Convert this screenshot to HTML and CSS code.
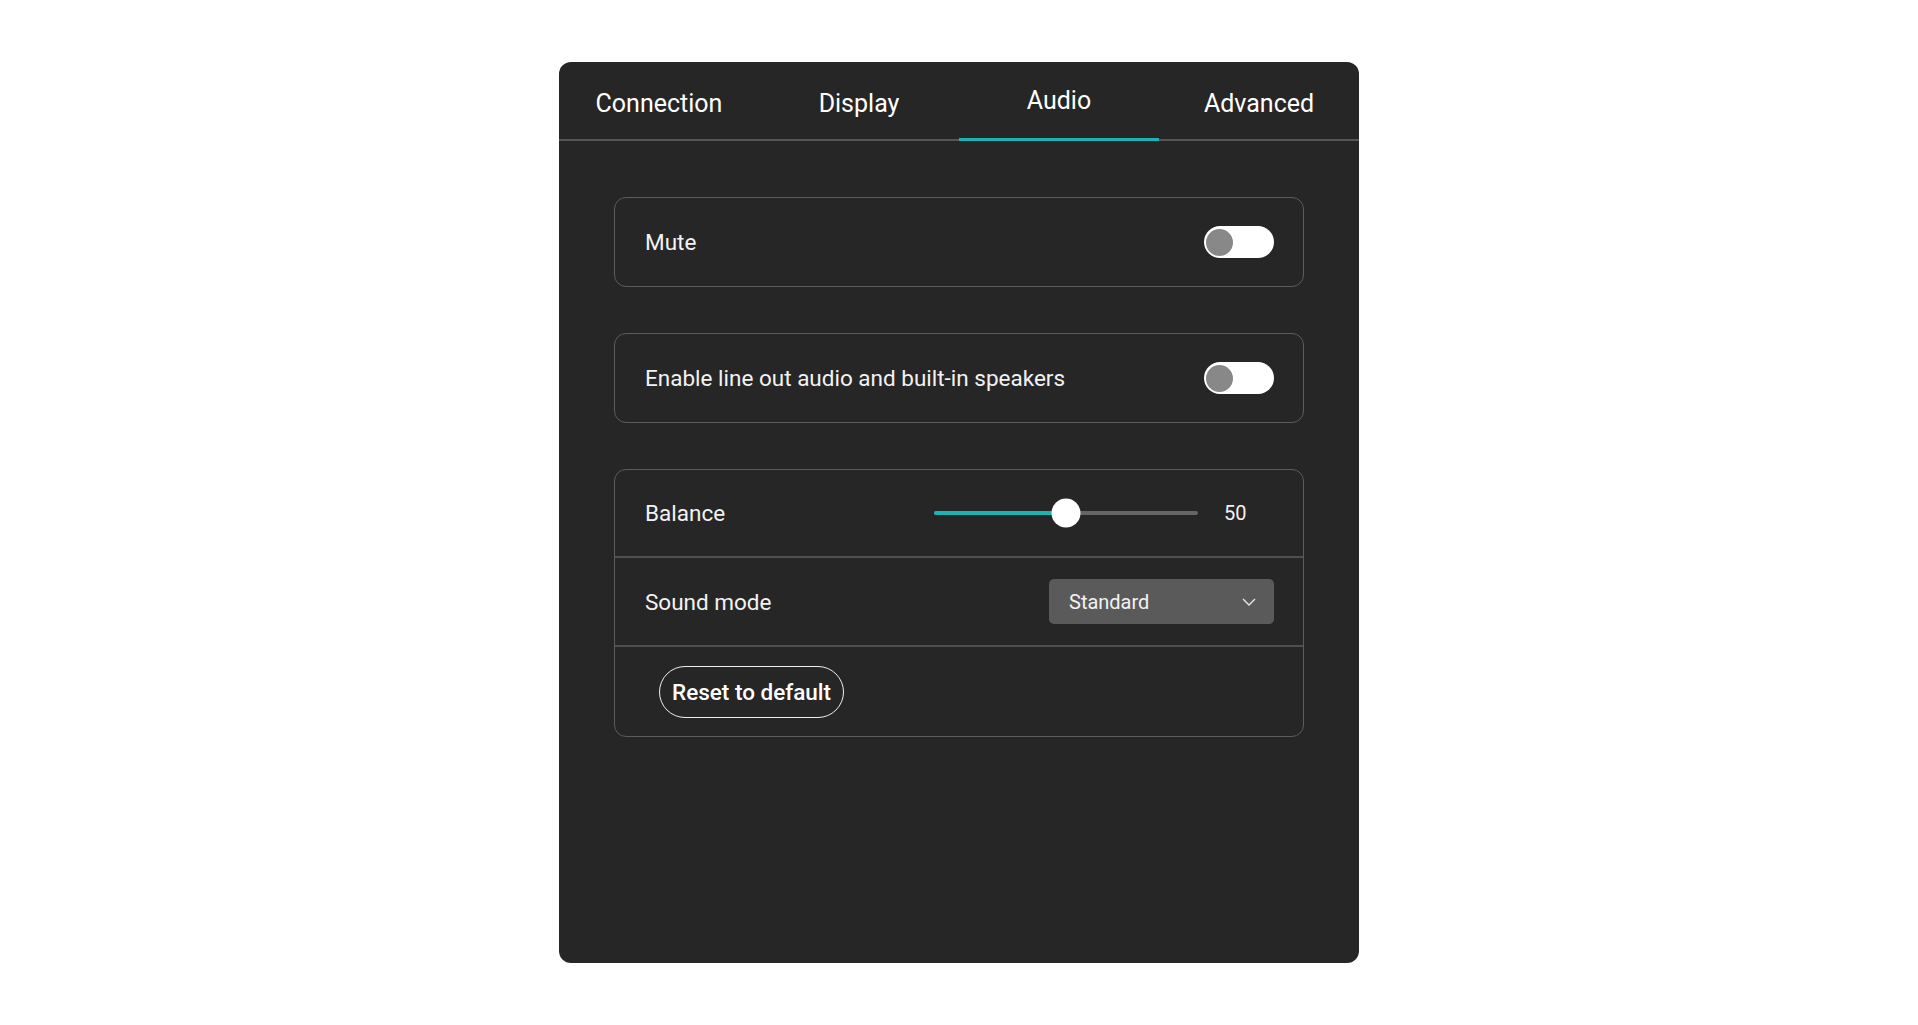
FILE: index.html
```html
<!DOCTYPE html>
<html lang="en">
<head>
    <meta charset="UTF-8">
    <meta name="viewport" content="width=device-width, initial-scale=1.0">
    <title>Audio Settings</title>
    <link rel="stylesheet" href="styles.css">
</head>
<body>
    <div class="panel">
        <nav class="tabs">
            <a class="tab">Connection</a>
            <a class="tab">Display</a>
            <a class="tab active">Audio</a>
            <a class="tab">Advanced</a>
        </nav>

        <div class="content">
            <div class="card">
                <div class="row">
                    <span class="label">Mute</span>
                    <div class="toggle"><span class="knob"></span></div>
                </div>
            </div>

            <div class="card">
                <div class="row">
                    <span class="label">Enable line out audio and built-in speakers</span>
                    <div class="toggle"><span class="knob"></span></div>
                </div>
            </div>

            <div class="card">
                <div class="row">
                    <span class="label">Balance</span>
                    <div class="slider">
                        <div class="track">
                            <div class="fill" style="width: 50%"></div>
                            <span class="thumb" style="left: 50%"></span>
                        </div>
                        <span class="value">50</span>
                    </div>
                </div>
                <div class="row">
                    <span class="label">Sound mode</span>
                    <div class="select">
                        <span>Standard</span>
                        <svg width="14" height="8" viewBox="0 0 14 8">
                            <path d="M1 1 L7 7 L13 1" fill="none" stroke="#e6e6e6" stroke-width="1.4"/>
                        </svg>
                    </div>
                </div>
                <div class="row reset-row">
                    <button class="reset">Reset to default</button>
                </div>
            </div>
        </div>
    </div>
</body>
</html>
```

FILE: styles.css
```css
:root {
    --panel-color: #262626;
    --border-color: #5c5c5c;
    --divider-color: #4f4f4f;
    --accent-color: #1ab4b4;
    --text-color: #f2f2f2;
}

body {
    margin: 0;
    min-height: 100vh;
    display: flex;
    justify-content: center;
    align-items: center;
    background: #fff;
    font-family: Roboto, "Liberation Sans", Arial, sans-serif;
    color: var(--text-color);
}

.panel {
    width: 800px;
    height: 901px;
    background: var(--panel-color);
    border-radius: 12px;
    overflow: hidden;
}

.tabs {
    display: flex;
    height: 77px;
    border-bottom: 2px solid #555;
}

.tab {
    flex: 1;
    box-sizing: border-box;
    height: 79px;
    padding-top: 27px;
    border-bottom: 3px solid transparent;
    color: #fff;
    font-size: 25px;
    line-height: 30px;
    text-align: center;
    cursor: pointer;
}

.tab.active {
    padding-top: 24px;
    border-bottom-color: var(--accent-color);
}

.content {
    padding: 56px 55px 0;
    display: flex;
    flex-direction: column;
    gap: 46px;
}

.card {
    border: 1px solid var(--border-color);
    border-radius: 12px;
}

.row {
    height: 88px;
    padding: 0 29px 0 30px;
    display: flex;
    align-items: center;
    justify-content: space-between;
}

.card .row:first-child:not(:last-child) {
    height: 86px;
}

.row + .row {
    height: 87px;
    border-top: 2px solid var(--divider-color);
}

.label {
    font-size: 22.5px;
}

.toggle {
    width: 70px;
    height: 32px;
    border-radius: 16px;
    background: #fff;
    display: flex;
    align-items: center;
    padding-left: 2px;
    box-sizing: border-box;
}

.knob {
    width: 27px;
    height: 27px;
    border-radius: 50%;
    background: #888;
}

.slider {
    display: flex;
    align-items: center;
}

.track {
    position: relative;
    width: 264px;
    height: 4px;
    border-radius: 2px;
    background: #666;
}

.fill {
    height: 100%;
    border-radius: 2px;
    background: var(--accent-color);
}

.thumb {
    position: absolute;
    top: 50%;
    width: 29px;
    height: 29px;
    border-radius: 50%;
    background: #fff;
    transform: translate(-50%, -50%);
}

.value {
    width: 50px;
    margin-left: 26px;
    font-size: 20px;
}

.select {
    width: 225px;
    height: 45px;
    box-sizing: border-box;
    padding: 0 18px 0 20px;
    border-radius: 5px;
    background: #5a5a5a;
    display: flex;
    align-items: center;
    justify-content: space-between;
    font-size: 20px;
}

.row.reset-row {
    height: 89px;
    padding-left: 44px;
}

.reset {
    height: 52px;
    padding: 0 12px;
    border: 1.5px solid #eee;
    border-radius: 26px;
    background: none;
    color: #fff;
    font-family: inherit;
    font-size: 22.5px;
    font-weight: 500;
    cursor: pointer;
}
```
